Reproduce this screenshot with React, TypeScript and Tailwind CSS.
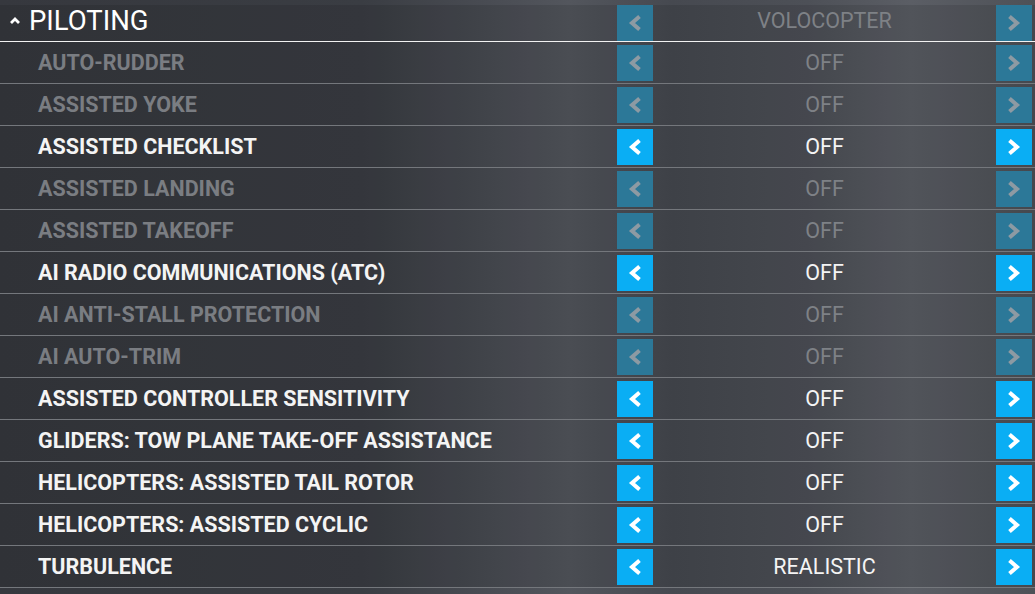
import React from "react";

type Row = { label: string; value: string; on: boolean };

const rows: Row[] = [
  { label: "AUTO-RUDDER", value: "OFF", on: false },
  { label: "ASSISTED YOKE", value: "OFF", on: false },
  { label: "ASSISTED CHECKLIST", value: "OFF", on: true },
  { label: "ASSISTED LANDING", value: "OFF", on: false },
  { label: "ASSISTED TAKEOFF", value: "OFF", on: false },
  { label: "AI RADIO COMMUNICATIONS (ATC)", value: "OFF", on: true },
  { label: "AI ANTI-STALL PROTECTION", value: "OFF", on: false },
  { label: "AI AUTO-TRIM", value: "OFF", on: false },
  { label: "ASSISTED CONTROLLER SENSITIVITY", value: "OFF", on: true },
  { label: "GLIDERS: TOW PLANE TAKE-OFF ASSISTANCE", value: "OFF", on: true },
  { label: "HELICOPTERS: ASSISTED TAIL ROTOR", value: "OFF", on: true },
  { label: "HELICOPTERS: ASSISTED CYCLIC", value: "OFF", on: true },
  { label: "TURBULENCE", value: "REALISTIC", on: true },
];

function Chevron({ dir, on }: { dir: "l" | "r"; on: boolean }) {
  return (
    <svg width="14" height="18" viewBox="0 0 14 18">
      <polyline
        points={dir === "l" ? "11.5,2.5 4,9 11.5,15.5" : "2.5,2.5 10,9 2.5,15.5"}
        fill="none"
        stroke={on ? "#ffffff" : "#8d9aa3"}
        strokeWidth="4"
        strokeLinecap="butt"
        strokeLinejoin="miter"
      />
    </svg>
  );
}

function Btn({ dir, on }: { dir: "l" | "r"; on: boolean }) {
  return (
    <div
      className={
        "w-[36px] h-[36px] flex items-center justify-center " +
        (on ? "bg-[#0aaef4]" : "bg-[#2c7898]")
      }
    >
      <Chevron dir={dir} on={on} />
    </div>
  );
}

export default function App() {
  return (
    <div
      className="w-[1035px] h-[594px] overflow-hidden bg-[linear-gradient(90deg,#36383e_0%,#3a3d43_35%,#4a4d54_48%,#53565d_55%,#464950_65%,#4d5057_78%,#5b5e65_88%,#4e5157_100%)]"
      style={{ fontFamily: "Roboto, 'Liberation Sans', sans-serif" }}
    >
      <div className="h-[5px]" />
      <div className="h-[36px] flex items-center bg-black/10">
        <div className="w-[29px] flex justify-center pl-[1px] pb-[6px]">
          <svg width="12" height="9" viewBox="0 0 12 9">
            <polyline points="2,7 6,3 10,7" fill="none" stroke="#fff" strokeWidth="2.8" />
          </svg>
        </div>
        <div className="text-[27.5px] text-white leading-none pb-[5px]">PILOTING</div>
        <div className="ml-auto flex items-center w-[418px] pr-[3px]">
          <Btn dir="l" on={false} />
          <div className="flex-1 text-center text-[21.5px] leading-none text-[#7e8186] pb-[5px]">VOLOCOPTER</div>
          <Btn dir="r" on={false} />
        </div>
      </div>
      <div className="h-[1px] bg-[#f2f2f2]" />
      {rows.map((r) => (
        <div key={r.label} className="h-[42px] flex flex-col">
          <div className="h-[41px] flex items-center bg-black/10">
            <div
              className={
                "pl-[38px] text-[21.5px] font-bold leading-none " +
                (r.on ? "text-[#f4f4f4]" : "text-[#7a7d82]")
              }
            >
              {r.label}
            </div>
            <div className="ml-auto flex items-center w-[418px] pr-[3px]">
              <Btn dir="l" on={r.on} />
              <div
                className={
                  "flex-1 text-center text-[21.5px] leading-none " +
                  (r.on ? "text-[#f4f4f4]" : "text-[#7e8186]")
                }
              >
                {r.value}
              </div>
              <Btn dir="r" on={r.on} />
            </div>
          </div>
          <div className="h-[1px] bg-[#74777c]" />
        </div>
      ))}
    </div>
  );
}
